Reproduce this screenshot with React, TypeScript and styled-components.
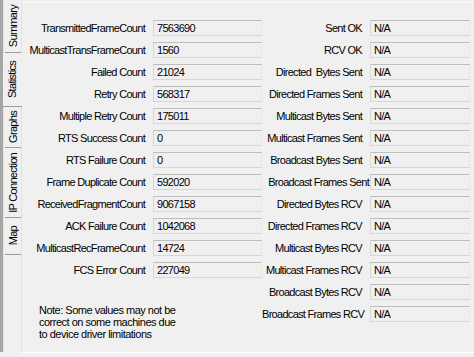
import React from "react";
import styled, { createGlobalStyle } from "styled-components";

const Global = createGlobalStyle`
  html, body { margin: 0; padding: 0; background: #f0f0f0; }
  body { font-family: "Liberation Sans", Arial, sans-serif; }
`;

const Window = styled.div`
  width: 474px;
  height: 357px;
  background: #f0f0f0;
  display: flex;
  overflow: hidden;
  font-family: "Liberation Sans", Arial, sans-serif;
  font-size: 11px;
  letter-spacing: -0.7px;
  color: #000;
`;

const Edge = styled.div`
  width: 4px;
  height: 352px;
  background: #a6a6a6;
  border-right: 1px solid #e4e4e4;
  box-sizing: border-box;
`;

const TabStrip = styled.div`
  width: 17px;
  display: flex;
  flex-direction: column;
`;

const Tab = styled.div<{ $h: number; $active?: boolean }>`
  height: ${(p) => p.$h}px;
  box-sizing: border-box;
  display: flex;
  align-items: center;
  justify-content: center;
  margin-left: ${(p) => (p.$active ? "-1px" : "1px")};
  margin-right: ${(p) => (p.$active ? "-1px" : "0")};
  padding-right: ${(p) => (p.$active ? "2px" : "0")};
  border-bottom: 1px solid #9c9c9c;
  background: #f0f0f0;
  position: relative;
  z-index: ${(p) => (p.$active ? 2 : 1)};
`;

const TabText = styled.span`
  writing-mode: vertical-rl;
  transform: rotate(180deg);
  white-space: nowrap;
  line-height: 12px;
`;

const Panel = styled.div`
  flex: 1;
  margin-top: 2px;
  height: 351px;
  box-sizing: border-box;
  border-left: 1px solid #e2e2e2;
  border-top: 1px solid #fbfbfb;
  border-bottom: 1px solid #ffffff;
  padding-top: 14px;
  display: flex;
  position: relative;
  z-index: 1;
`;

const Column = styled.div`
  display: flex;
  flex-direction: column;
`;

const Row = styled.div`
  height: 22px;
  display: flex;
  align-items: center;
`;

const Label = styled.div<{ $w: number; $overhang?: boolean }>`
  width: ${(p) => p.$w}px;
  box-sizing: border-box;
  padding-right: ${(p) => (p.$overhang ? "1px" : "8px")};
  text-align: right;
  white-space: pre;
`;

const Box = styled.div<{ $w: number }>`
  width: ${(p) => p.$w}px;
  height: 16px;
  box-sizing: border-box;
  border: 1px solid #d6d6d6;
  border-top-color: #bdbdbd;
  border-right-color: #e9e9e9;
  background: #f0f0f0;
  padding-left: 3px;
  line-height: 14px;
  white-space: nowrap;
`;

const Note = styled.div`
  margin-top: 23px;
  padding-left: 17px;
  line-height: 12px;
  letter-spacing: -0.5px;
`;

const left: [string, string][] = [
  ["TransmittedFrameCount", "7563690"],
  ["MulticastTransFrameCount", "1560"],
  ["Failed Count", "21024"],
  ["Retry Count", "568317"],
  ["Multiple Retry Count", "175011"],
  ["RTS Success Count", "0"],
  ["RTS Failure Count", "0"],
  ["Frame Duplicate Count", "592020"],
  ["ReceivedFragmentCount", "9067158"],
  ["ACK Failure Count", "1042068"],
  ["MulticastRecFrameCount", "14724"],
  ["FCS Error Count", "227049"],
];

const right: string[] = [
  "Sent OK",
  "RCV OK",
  "Directed  Bytes Sent",
  "Directed Frames Sent",
  "Multicast Bytes Sent",
  "Multicast Frames Sent",
  "Broadcast Bytes Sent",
  "Broadcast Frames Sent",
  "Directed Bytes RCV",
  "Directed Frames RCV",
  "Multicast Bytes RCV",
  "Multicast Frames RCV",
  "Broadcast Bytes RCV",
  "Broadcast Frames RCV",
];

const tabs: { name: string; h: number; active?: boolean }[] = [
  { name: "Summary", h: 53 },
  { name: "Statistics", h: 54, active: true },
  { name: "Graphs", h: 41 },
  { name: "IP Connection", h: 70 },
  { name: "Map", h: 37 },
];

export default function App() {
  return (
    <>
      <Global />
      <Window>
        <Edge />
        <TabStrip>
          {tabs.map((t) => (
            <Tab key={t.name} $h={t.h} $active={t.active}>
              <TabText>{t.name}</TabText>
            </Tab>
          ))}
        </TabStrip>
        <Panel>
          <Column>
            {left.map(([l, v]) => (
              <Row key={l}>
                <Label $w={131}>{l}</Label>
                <Box $w={109}>{v}</Box>
              </Row>
            ))}
            <Note>
              Note: Some values may not be
              <br />
              correct on some machines due
              <br />
              to device driver limitations
            </Note>
          </Column>
          <Column>
            {right.map((l) => (
              <Row key={l}>
                <Label $w={108} $overhang={l === "Broadcast Frames Sent"}>
                  {l}
                </Label>
                <Box $w={100}>N/A</Box>
              </Row>
            ))}
          </Column>
        </Panel>
      </Window>
    </>
  );
}
